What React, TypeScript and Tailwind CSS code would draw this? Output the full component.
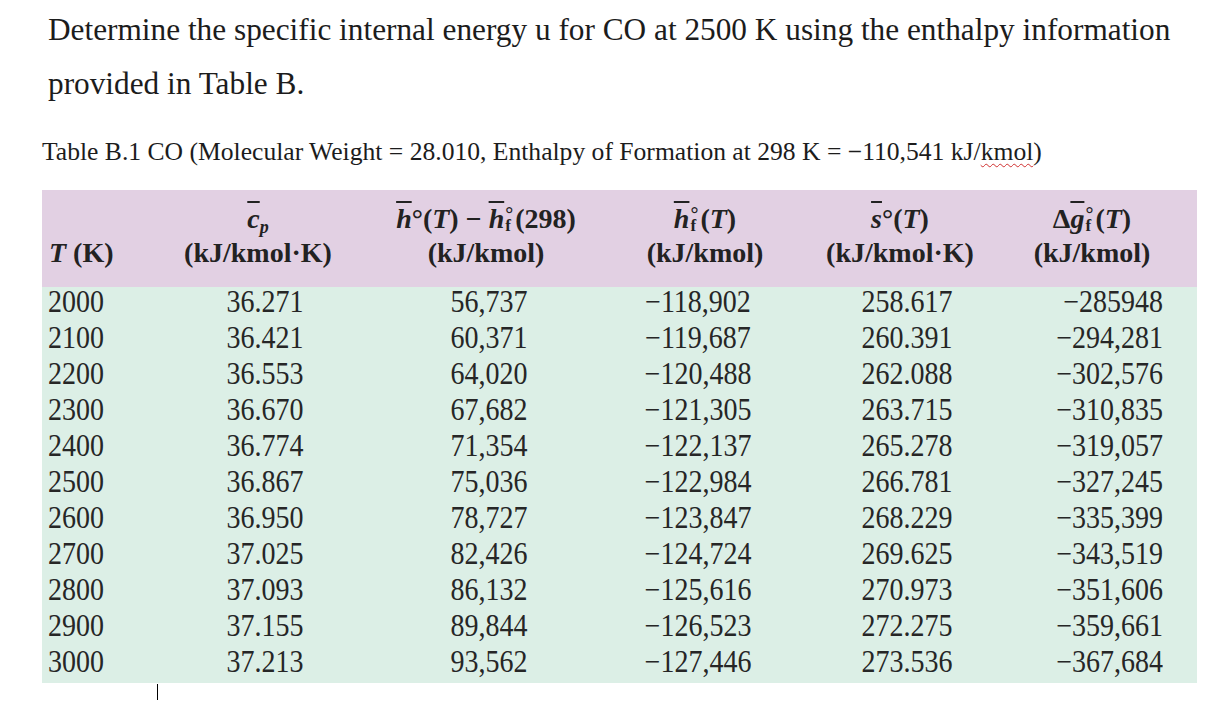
const rows: string[][] = [
  ["2000", "36.271", "56,737", "−118,902", "258.617", "−285948"],
  ["2100", "36.421", "60,371", "−119,687", "260.391", "−294,281"],
  ["2200", "36.553", "64,020", "−120,488", "262.088", "−302,576"],
  ["2300", "36.670", "67,682", "−121,305", "263.715", "−310,835"],
  ["2400", "36.774", "71,354", "−122,137", "265.278", "−319,057"],
  ["2500", "36.867", "75,036", "−122,984", "266.781", "−327,245"],
  ["2600", "36.950", "78,727", "−123,847", "268.229", "−335,399"],
  ["2700", "37.025", "82,426", "−124,724", "269.625", "−343,519"],
  ["2800", "37.093", "86,132", "−125,616", "270.973", "−351,606"],
  ["2900", "37.155", "89,844", "−126,523", "272.275", "−359,661"],
  ["3000", "37.213", "93,562", "−127,446", "273.536", "−367,684"],
];

// overbarred italic letter
function Bar({ c }: { c: string }) {
  return <span className="italic overline decoration-[1.5px]">{c}</span>;
}

// degree sign stacked over subscript f, kept out of the line box
function DegF() {
  return (
    <span className="relative inline-block w-[11px] h-[20px] align-baseline">
      <span className="absolute left-[1px] top-[-4px] text-[20px] leading-[20px]">°</span>
      <span className="absolute left-[1px] top-[9px] text-[17px] leading-[17px]">f</span>
    </span>
  );
}

const cols = "grid grid-cols-[118px_204px_244px_194px_220px_175px]";

export default function App() {
  return (
    <div className="w-[1221px] h-[701px] bg-white text-[#1c1c1c] font-['Liberation_Serif',serif] overflow-hidden">
      <div className="pl-[48px] pt-[3px] text-[31.3px] leading-[54px]">
        <p>Determine the specific internal energy u for CO at 2500 K using the enthalpy information</p>
        <p>provided in Table B.</p>
      </div>

      <p className="pl-[42px] mt-[26px] text-[25.6px] leading-[30px]">
        Table B.1 CO (Molecular Weight = 28.010, Enthalpy of Formation at 298 K = −110,541 kJ/
        <span className="underline decoration-wavy decoration-[#d03030] decoration-1 underline-offset-[3px]">kmol</span>)
      </p>

      <div className="ml-[42px] mt-[23px] w-[1155px]">
        {/* header */}
        <div className={`${cols} h-[97px] bg-[#e2d0e3] font-bold text-[28px] leading-[34px] pt-[12px] text-[#222]`}>
          <div className="pl-[7px] pt-[34px]">
            <span className="italic">T</span> (K)
          </div>
          <div className="text-center pr-[8px]">
            <div>
              <Bar c="c" />
              <sub className="italic text-[18px]">p</sub>
            </div>
            <div>(kJ/kmol·K)</div>
          </div>
          <div className="text-center">
            <div>
              <Bar c="h" />°(<span className="italic">T</span>) − <Bar c="h" />
              <DegF />(298)
            </div>
            <div>(kJ/kmol)</div>
          </div>
          <div className="text-center">
            <div>
              <Bar c="h" />
              <DegF />(<span className="italic">T</span>)
            </div>
            <div>(kJ/kmol)</div>
          </div>
          <div className="text-center pr-[24px]">
            <div>
              <Bar c="s" />°(<span className="italic">T</span>)
            </div>
            <div>(kJ/kmol·K)</div>
          </div>
          <div className="text-center pr-[35px]">
            <div>
              Δ<Bar c="g" />
              <DegF />(<span className="italic">T</span>)
            </div>
            <div>(kJ/kmol)</div>
          </div>
        </div>

        {/* body */}
        <div className="bg-[#dcefe6] text-[28px] leading-[30px] text-[#262626]">
          {rows.map((r) => (
            <div key={r[0]} className={`${cols} h-[36px]`}>
              <div className="pl-[6px] scale-y-[1.12]">{r[0]}</div>
              <div className="text-center pl-[6px] scale-y-[1.12]">{r[1]}</div>
              <div className="text-center pl-[6px] scale-y-[1.12]">{r[2]}</div>
              <div className="text-center pr-[14px] scale-y-[1.12]">{r[3]}</div>
              <div className="text-center pr-[10px] scale-y-[1.12]">{r[4]}</div>
              <div className="text-right pr-[34px] scale-y-[1.12]">{r[5]}</div>
            </div>
          ))}
        </div>
      </div>

      <div className="ml-[157px] mt-[1px] w-px h-[16px] bg-black" />
    </div>
  );
}
